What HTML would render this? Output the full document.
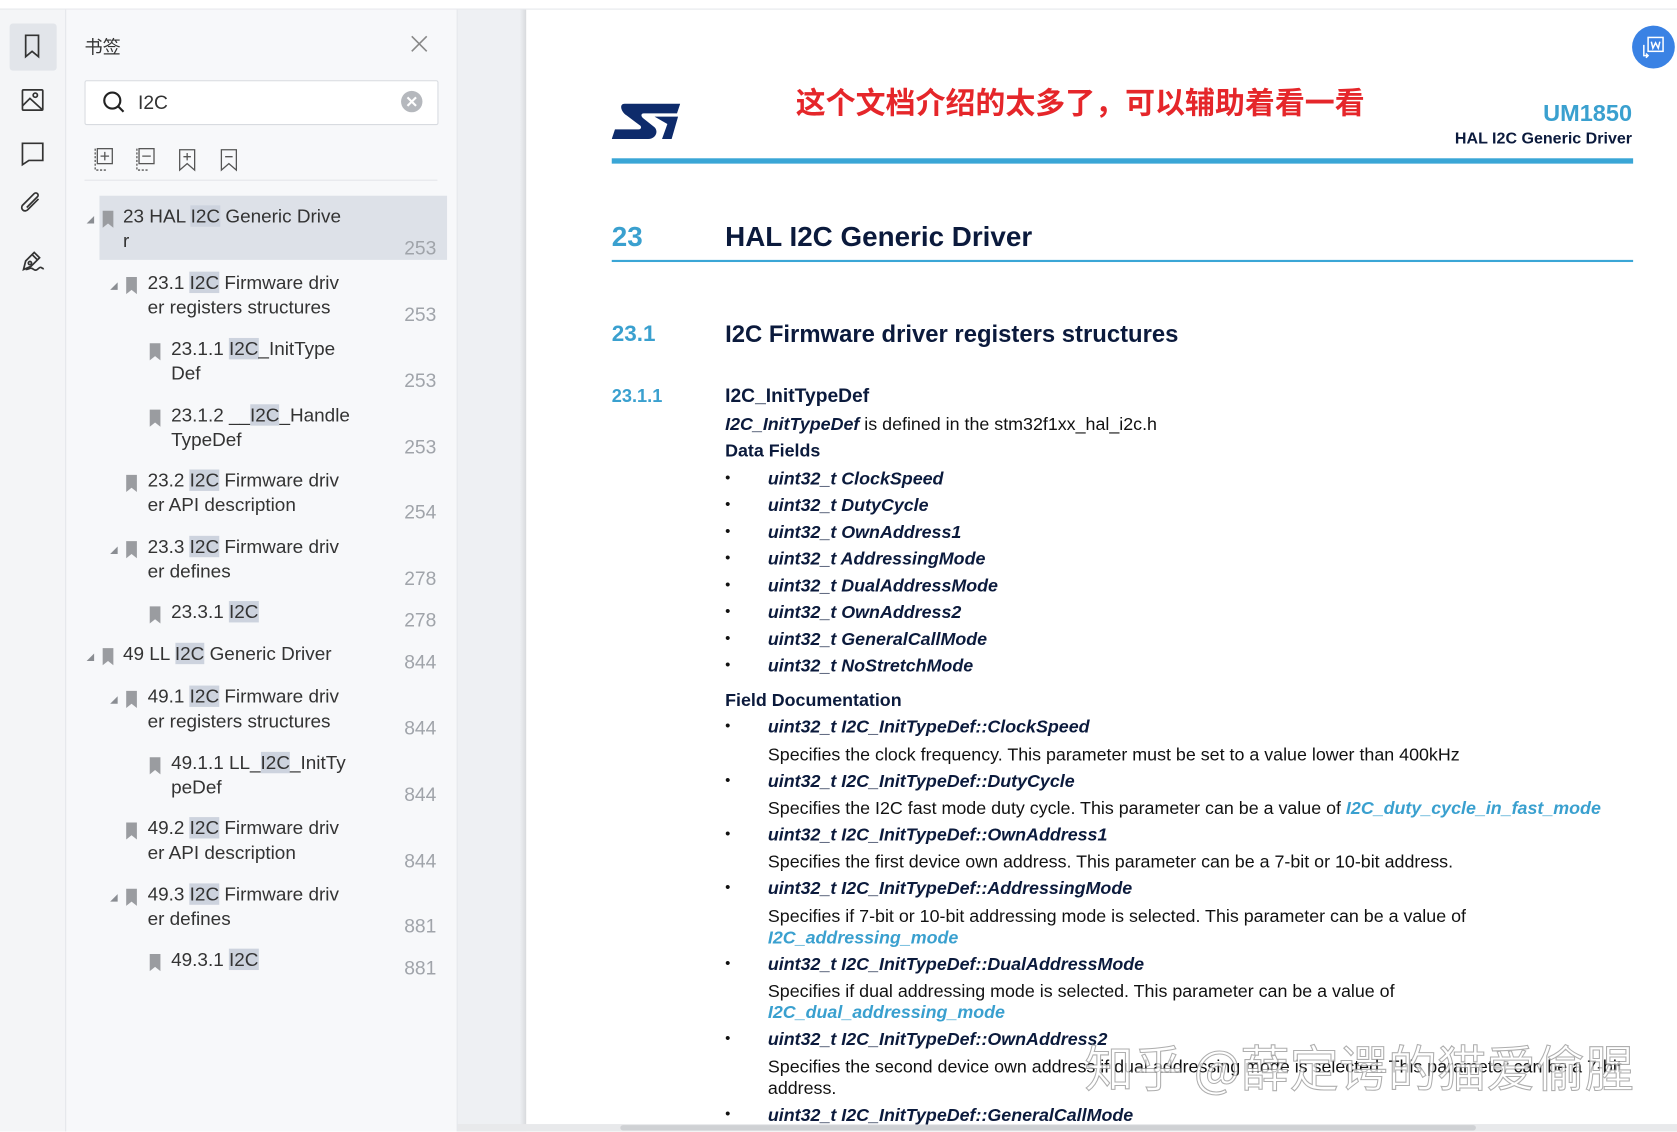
<!DOCTYPE html>
<html><head><meta charset="utf-8">
<style>
html,body{margin:0;padding:0;width:1677px;height:1131px;overflow:hidden;background:#fff}
#w{position:absolute;left:0;top:0;width:1568px;height:1058px;transform:scale(1.0695);transform-origin:0 0;font-family:"Liberation Sans","Noto Sans CJK SC",sans-serif}
.a{position:absolute;white-space:nowrap}
.sb{font-size:17.7px;color:#333;line-height:23px}
.hl{background:#cdd3de}
.pg{font-size:18px;color:#a0a4aa;width:60px;text-align:right;left:348px}
.t{font-size:16.7px;color:#111;line-height:20px}
.b{font-weight:bold;font-style:italic;color:#0b1a3c}
.lk{color:#3aa0cf;font-weight:bold;font-style:italic}
.dot{left:678px;font-size:14px;color:#111}
</style></head><body><div id="w">
<div class="a" style="left:0;top:0;width:1568px;height:8px;background:#fff;border-bottom:1px solid #e4e6ea"></div>
<div class="a" style="left:0;top:9px;width:61px;height:1049px;background:#f4f5f7;border-right:1px solid #e2e4e8"></div>
<div class="a" style="left:9px;top:22px;width:44px;height:44px;background:#e2e5ea;border-radius:3px"></div>
<svg class="a" style="left:0;top:0" width="62" height="270" fill="none" stroke="#333" stroke-width="1.6">
<path d="M24 33h12v20l-6-5-6 5z"/>
<rect x="21" y="84" width="19" height="19" rx="1"/><circle cx="33" cy="89" r="2"/><path d="M21 99l7-7 12 11"/>
<path d="M21 134h19v16H27l-6 4z"/>
<path d="M36 186l-10 10a3 3 0 0 1-5-4l11-11a2 2 0 0 1 3 3l-10 10"/>
<path d="M22 252l2-8 8-8 5 5-8 8zM30 238l5 5M24 252c3 0 4-2 6-1s3 3 6 0 3 1 5 0"/><circle cx="28" cy="246" r="1.5"/>
</svg>
<div class="a" style="left:62px;top:9px;width:365px;height:1049px;background:#f7f8fa;border-right:1px solid #e2e4e8"></div>
<div class="a" style="left:79px;top:30px;font-size:17px;color:#333">书签</div>
<svg class="a" style="left:383px;top:32px" width="18" height="18" stroke="#888" stroke-width="1.5"><path d="M2 2l14 14M16 2L2 16"/></svg>
<div class="a" style="left:79px;top:75px;width:329px;height:40px;background:#fff;border:1px solid #d8dbe0;border-radius:2px"></div>
<svg class="a" style="left:95px;top:84px" width="24" height="24" fill="none" stroke="#222" stroke-width="2"><circle cx="10" cy="10" r="7.5"/><path d="M15.5 15.5l5 5"/></svg>
<div class="a" style="left:129px;top:86px;font-size:18px;color:#333">I2C</div>
<svg class="a" style="left:374px;top:84px" width="22" height="22"><circle cx="11" cy="11" r="10" fill="#b5b8bd"/><path d="M7 7l8 8M15 7l-8 8" stroke="#fff" stroke-width="2"/></svg>
<svg class="a" style="left:85px;top:136px" width="150" height="26" fill="none" stroke="#555" stroke-width="1.2">
<path d="M4 3v20h10" stroke-dasharray="2 1.5"/><rect x="6" y="3" width="14" height="14"/><path d="M13 6v8M9 10h8"/>
<path d="M43 3v20h10" stroke-dasharray="2 1.5"/><rect x="45" y="3" width="14" height="14"/><path d="M48 10h8"/>
<path d="M83 4h14v19l-7-6-7 6z"/><path d="M90 7v7M86.5 10.5h7"/>
<path d="M122 4h14v19l-7-6-7 6z"/><path d="M125.5 10.5h7"/>
</svg>
<div class="a" style="left:79px;top:168px;width:330px;height:1px;background:#e4e6ea"></div>
<div class="a" style="left:93px;top:183px;width:325px;height:60px;background:#dde1e8"></div>

<div class="a sb" style="left:115px;top:191px">23 HAL <span class="hl">I2C</span> Generic Drive<br>r</div><div class="a pg" style="top:222px">253</div>
<div class="a sb" style="left:138px;top:253px">23.1 <span class="hl">I2C</span> Firmware driv<br>er registers structures</div><div class="a pg" style="top:284px">253</div>
<div class="a sb" style="left:160px;top:315px">23.1.1 <span class="hl">I2C</span>_InitType<br>Def</div><div class="a pg" style="top:346px">253</div>
<div class="a sb" style="left:160px;top:377px">23.1.2 __<span class="hl">I2C</span>_Handle<br>TypeDef</div><div class="a pg" style="top:408px">253</div>
<div class="a sb" style="left:138px;top:438px">23.2 <span class="hl">I2C</span> Firmware driv<br>er API description</div><div class="a pg" style="top:469px">254</div>
<div class="a sb" style="left:138px;top:500px">23.3 <span class="hl">I2C</span> Firmware driv<br>er defines</div><div class="a pg" style="top:531px">278</div>
<div class="a sb" style="left:160px;top:561px">23.3.1 <span class="hl">I2C</span></div><div class="a pg" style="top:570px">278</div>
<div class="a sb" style="left:115px;top:600px">49 LL <span class="hl">I2C</span> Generic Driver</div><div class="a pg" style="top:609px">844</div>
<div class="a sb" style="left:138px;top:640px">49.1 <span class="hl">I2C</span> Firmware driv<br>er registers structures</div><div class="a pg" style="top:671px">844</div>
<div class="a sb" style="left:160px;top:702px">49.1.1 LL_<span class="hl">I2C</span>_InitTy<br>peDef</div><div class="a pg" style="top:733px">844</div>
<div class="a sb" style="left:138px;top:763px">49.2 <span class="hl">I2C</span> Firmware driv<br>er API description</div><div class="a pg" style="top:795px">844</div>
<div class="a sb" style="left:138px;top:825px">49.3 <span class="hl">I2C</span> Firmware driv<br>er defines</div><div class="a pg" style="top:856px">881</div>
<div class="a sb" style="left:160px;top:886px">49.3.1 <span class="hl">I2C</span></div><div class="a pg" style="top:895px">881</div>

<svg class="a" style="left:0;top:0" width="160" height="920" fill="#8a8d92">
<g>
<path d="M81 209l7-7v7z"/><path d="M103 271l7-7v7z"/><path d="M103 518l7-7v7z"/><path d="M81 618l7-7v7z"/><path d="M103 658l7-7v7z"/><path d="M103 843l7-7v7z"/>
</g>
<g fill="#9a9ca0">
<path d="M96 197h10v16l-5-4-5 4z"/>
<path d="M118 259h10v16l-5-4-5 4z"/>
<path d="M140 321h10v16l-5-4-5 4z"/>
<path d="M140 383h10v16l-5-4-5 4z"/>
<path d="M118 444h10v16l-5-4-5 4z"/>
<path d="M118 506h10v16l-5-4-5 4z"/>
<path d="M140 567h10v16l-5-4-5 4z"/>
<path d="M96 606h10v16l-5-4-5 4z"/>
<path d="M118 646h10v16l-5-4-5 4z"/>
<path d="M140 708h10v16l-5-4-5 4z"/>
<path d="M118 769h10v16l-5-4-5 4z"/>
<path d="M118 831h10v16l-5-4-5 4z"/>
<path d="M140 892h10v16l-5-4-5 4z"/>
</g>
</svg>

<div class="a" style="left:428px;top:9px;width:62px;height:1049px;background:#eef0f3"></div>
<div class="a" style="left:486px;top:9px;width:6px;height:1049px;background:linear-gradient(90deg,#eef0f3,#d8dadd)"></div>
<div class="a" style="left:428px;top:1051px;width:1140px;height:7px;background:#e8e9eb"></div>
<div class="a" style="left:580px;top:1052px;width:800px;height:5px;background:#cfd1d4;border-radius:3px"></div>

<div class="a" style="left:1526px;top:24px;width:40px;height:40px;border-radius:50%;background:#3a82e4"></div>
<svg class="a" style="left:1534px;top:32px" width="24" height="24" fill="none" stroke="#fff" stroke-width="1.4"><rect x="7" y="3" width="14" height="13"/><path d="M10 7l1.5 6 2.5-5 2.5 5 1.5-6M3 10v10h4M5 18l2 2-2 2"/></svg>

<svg class="a" style="left:572px;top:95px" width="64" height="36"><path d="M12 2h52l-3 9H30c-3 0-3 3 0 5l10 8c4 4 1 11-6 11H0l3-9h22c3 0 3-3 1-4l-12-9C8 9 7 2 12 2z" fill="#0e2b6b"/><path d="M40 14h22l-6 21h-9l5-14z" fill="#0e2b6b"/></svg>
<div class="a" style="left:744px;top:75px;font-size:28px;font-weight:bold;color:#e5262a;font-family:'Noto Sans CJK SC','WenQuanYi Zen Hei',sans-serif">这个文档介绍的太多了，可以辅助着看一看</div>
<div class="a" style="right:42px;top:93px;font-size:22px;font-weight:bold;color:#3aa0cf">UM1850</div>
<div class="a" style="right:42px;top:121px;font-size:15px;font-weight:bold;color:#0b1a3c">HAL I2C Generic Driver</div>
<div class="a" style="left:572px;top:148px;width:955px;height:5px;background:#3aa6d6"></div>

<div class="a" style="left:572px;top:206px;font-size:26px;font-weight:bold;color:#3aa0cf">23</div>
<div class="a" style="left:678px;top:206px;font-size:26px;font-weight:bold;color:#0b1a3c">HAL I2C Generic Driver</div>
<div class="a" style="left:572px;top:243px;width:955px;height:2px;background:#3aa6d6"></div>

<div class="a" style="left:572px;top:301px;font-size:21px;font-weight:bold;color:#3aa0cf">23.1</div>
<div class="a" style="left:678px;top:300px;font-size:22.3px;font-weight:bold;color:#0b1a3c">I2C Firmware driver registers structures</div>

<div class="a" style="left:572px;top:361px;font-size:17px;font-weight:bold;color:#3aa0cf">23.1.1</div>
<div class="a" style="left:678px;top:360px;font-size:18px;font-weight:bold;color:#0b1a3c">I2C_InitTypeDef</div>

<div class="a t" style="left:678px;top:387px"><span class="b">I2C_InitTypeDef</span> is defined in the stm32f1xx_hal_i2c.h</div>
<div class="a t" style="left:678px;top:412px;font-weight:bold;color:#0b1a3c">Data Fields</div>

<div class="a dot" style="top:438px">•</div><div class="a t b" style="left:718px;top:438px">uint32_t ClockSpeed</div>
<div class="a dot" style="top:463px">•</div><div class="a t b" style="left:718px;top:463px">uint32_t DutyCycle</div>
<div class="a dot" style="top:488px">•</div><div class="a t b" style="left:718px;top:488px">uint32_t OwnAddress1</div>
<div class="a dot" style="top:513px">•</div><div class="a t b" style="left:718px;top:513px">uint32_t AddressingMode</div>
<div class="a dot" style="top:538px">•</div><div class="a t b" style="left:718px;top:538px">uint32_t DualAddressMode</div>
<div class="a dot" style="top:563px">•</div><div class="a t b" style="left:718px;top:563px">uint32_t OwnAddress2</div>
<div class="a dot" style="top:588px">•</div><div class="a t b" style="left:718px;top:588px">uint32_t GeneralCallMode</div>
<div class="a dot" style="top:613px">•</div><div class="a t b" style="left:718px;top:613px">uint32_t NoStretchMode</div>

<div class="a t" style="left:678px;top:645px;font-weight:bold;color:#0b1a3c">Field Documentation</div>
<div class="a dot" style="top:670px">•</div><div class="a t b" style="left:718px;top:670px">uint32_t I2C_InitTypeDef::ClockSpeed</div>
<div class="a t" style="left:718px;top:696px">Specifies the clock frequency. This parameter must be set to a value lower than 400kHz</div>
<div class="a dot" style="top:721px">•</div><div class="a t b" style="left:718px;top:721px">uint32_t I2C_InitTypeDef::DutyCycle</div>
<div class="a t" style="left:718px;top:746px">Specifies the I2C fast mode duty cycle. This parameter can be a value of <span class="lk">I2C_duty_cycle_in_fast_mode</span></div>
<div class="a dot" style="top:771px">•</div><div class="a t b" style="left:718px;top:771px">uint32_t I2C_InitTypeDef::OwnAddress1</div>
<div class="a t" style="left:718px;top:796px">Specifies the first device own address. This parameter can be a 7-bit or 10-bit address.</div>
<div class="a dot" style="top:821px">•</div><div class="a t b" style="left:718px;top:821px">uint32_t I2C_InitTypeDef::AddressingMode</div>
<div class="a t" style="left:718px;top:847px">Specifies if 7-bit or 10-bit addressing mode is selected. This parameter can be a value of</div>
<div class="a t lk" style="left:718px;top:867px">I2C_addressing_mode</div>
<div class="a dot" style="top:892px">•</div><div class="a t b" style="left:718px;top:892px">uint32_t I2C_InitTypeDef::DualAddressMode</div>
<div class="a t" style="left:718px;top:917px">Specifies if dual addressing mode is selected. This parameter can be a value of</div>
<div class="a t lk" style="left:718px;top:937px">I2C_dual_addressing_mode</div>
<div class="a dot" style="top:962px">•</div><div class="a t b" style="left:718px;top:962px">uint32_t I2C_InitTypeDef::OwnAddress2</div>
<div class="a t" style="left:718px;top:988px">Specifies the second device own address if dual addressing mode is selected. This parameter can be a 7-bit</div>
<div class="a t" style="left:718px;top:1008px">address.</div>
<div class="a dot" style="top:1033px">•</div><div class="a t b" style="left:718px;top:1033px">uint32_t I2C_InitTypeDef::GeneralCallMode</div>

<div class="a" style="left:1014px;top:964px;font-size:46px;color:rgba(255,255,255,0.75);-webkit-text-stroke:1px rgba(120,120,120,0.6);font-family:'Noto Sans CJK SC',sans-serif">知乎 @薛定谔的猫爱偷腥</div>
</div></body></html>
